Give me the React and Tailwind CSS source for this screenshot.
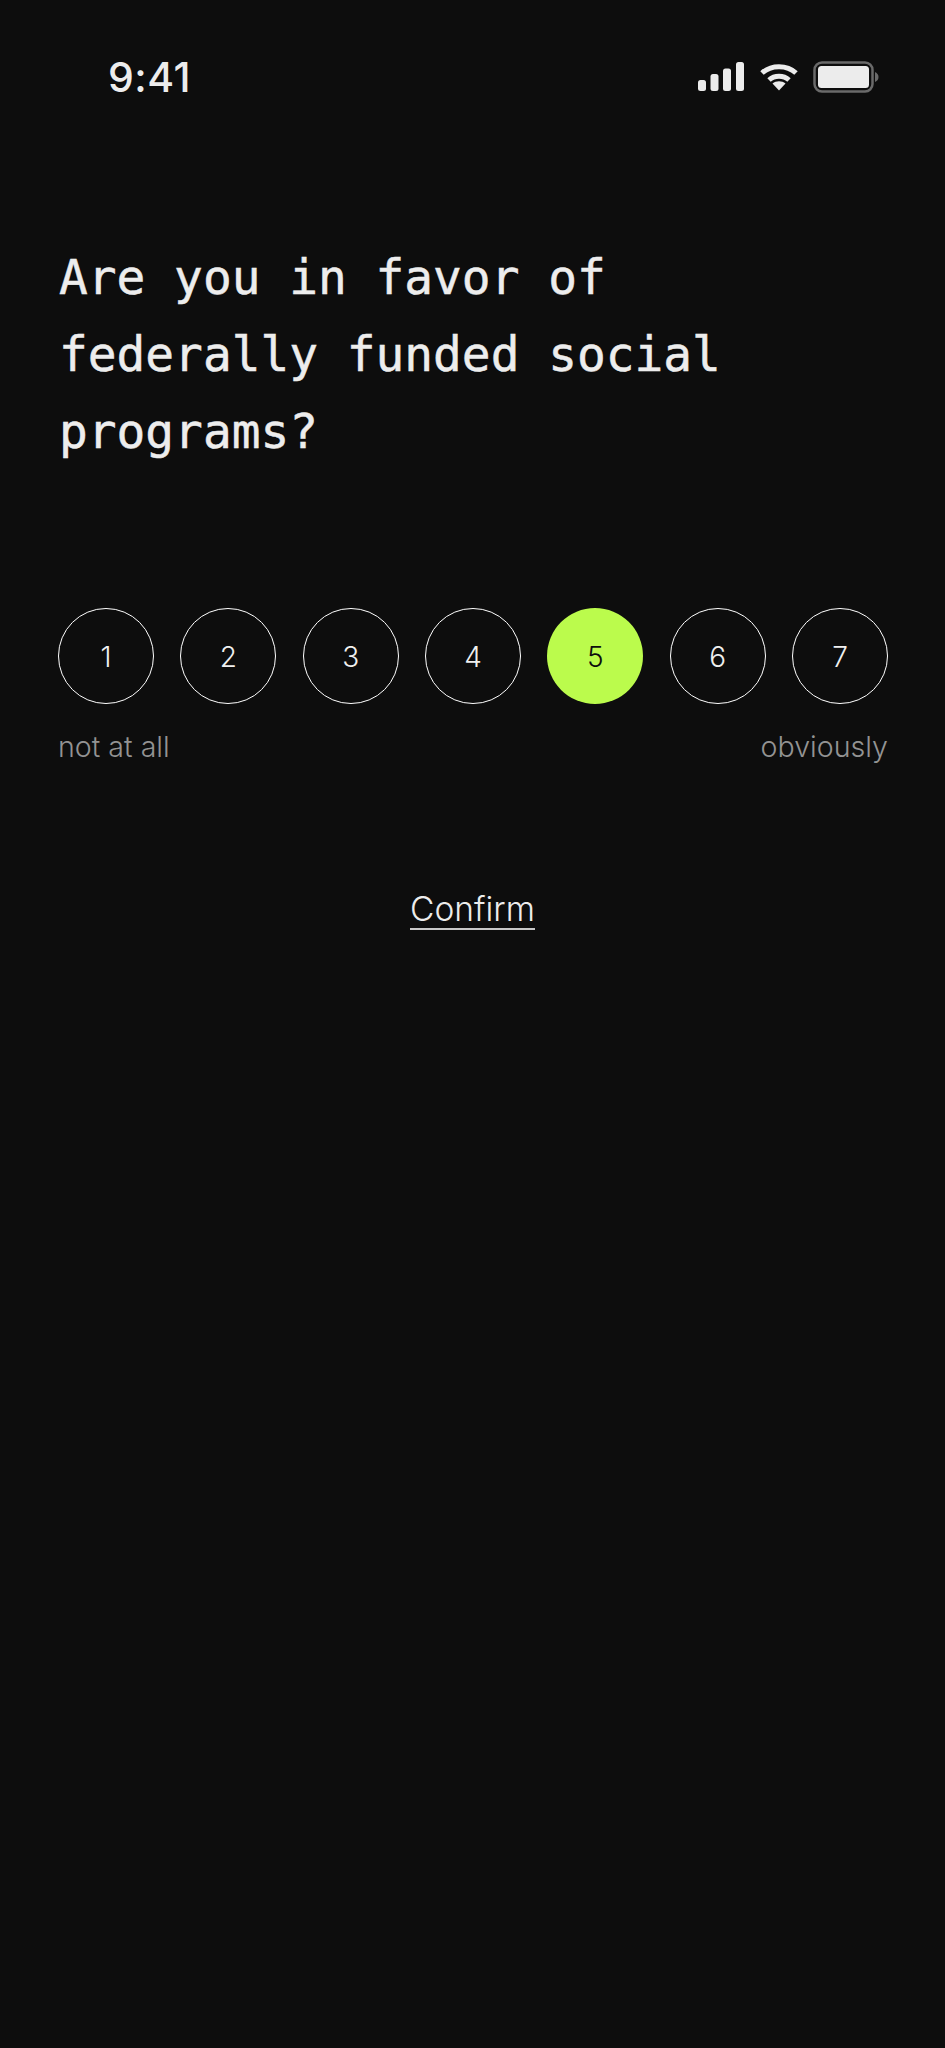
const nums = [1, 2, 3, 4, 5, 6, 7];

function Signal() {
  return (
    <svg width="47" height="30" viewBox="0 0 47 30" fill="#ececec">
      <rect x="0" y="18" width="8" height="11" rx="2.5" />
      <rect x="12.5" y="12" width="8" height="17" rx="2.5" />
      <rect x="25" y="6.5" width="8" height="22.5" rx="2.5" />
      <rect x="38" y="0" width="8" height="29" rx="2.5" />
    </svg>
  );
}

function Wifi() {
  return (
    <svg width="38" height="28" viewBox="0 0 38 28" fill="none" stroke="#ececec" strokeWidth="5">
      <path d="M2 10 C11 1.5 27 1.5 36 10" />
      <path d="M9 17 C14.5 12 23.5 12 29 17" />
      <path d="M12.5 20.5 C16 17.5 22 17.5 25.5 20.5 L19 27.5 Z" fill="#ececec" stroke="none" />
    </svg>
  );
}

function Battery() {
  return (
    <svg width="66" height="32" viewBox="0 0 66 32" fill="none">
      <rect x="1.5" y="1.5" width="58" height="29" rx="7.5" stroke="#6a6a6a" strokeWidth="2.5" />
      <rect x="5" y="5" width="51" height="22" rx="3.5" fill="#ececec" />
      <path d="M62 11 C64.5 12 65.5 14 65.5 16 C65.5 18 64.5 20 62 21 Z" fill="#6a6a6a" />
    </svg>
  );
}

export default function App() {
  return (
    <div className="min-h-[2048px] w-full bg-[#0d0d0d] font-['Inter',sans-serif]">
      <div className="flex items-center justify-between pt-[51px] pl-[108px] pr-[66px]">
        <span className="text-[41px] leading-[52px] font-medium tracking-[0.5px] text-[#ececec]">9:41</span>
        <div className="flex items-center gap-[15px]">
          <Signal />
          <Wifi />
          <Battery />
        </div>
      </div>

      <h1 className="mt-[136px] px-[59px] font-['DejaVu_Sans_Mono',monospace] text-[47.8px] leading-[77px] font-normal text-[#ededed] [-webkit-text-stroke:0.5px_#ededed]">
        Are you in favor of
        <br />
        federally funded social
        <br />
        programs?
      </h1>

      <div className="mt-[138px] flex justify-between pl-[58px] pr-[57px]">
        {nums.map((n) => (
          <div
            key={n}
            className={
              n === 5
                ? "flex h-[96px] w-[96px] items-center justify-center rounded-full bg-[#bbfb4c] pt-[2px] text-[28px] font-light text-[#0d0d0d]"
                : "flex h-[96px] w-[96px] items-center justify-center rounded-full border border-white pt-[2px] text-[28px] font-light text-[#f0f0f0]"
            }
          >
            {n}
          </div>
        ))}
      </div>

      <div className="mt-[23px] flex justify-between pl-[58px] pr-[57px] text-[28.6px] leading-[40px] font-light text-[#939393]">
        <span>not at all</span>
        <span>obviously</span>
      </div>

      <div className="mt-[123px] flex justify-center">
        <span className="border-b-2 border-[#c8c8c8] text-[33.5px] leading-[38px] font-light text-[#ececec]">Confirm</span>
      </div>
    </div>
  );
}
